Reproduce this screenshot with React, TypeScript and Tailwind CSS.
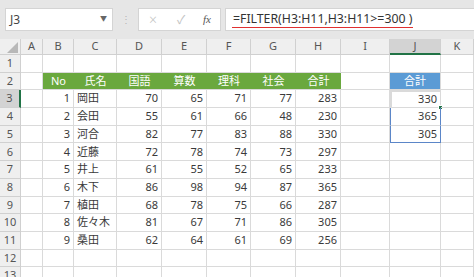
import React from "react";

const cols = [
  { k: "A", w: "w-[22px]" },
  { k: "B", w: "w-[31px]" },
  { k: "C", w: "w-[43px]" },
  { k: "D", w: "w-[45px]" },
  { k: "E", w: "w-[45px]" },
  { k: "F", w: "w-[44px]" },
  { k: "G", w: "w-[45px]" },
  { k: "H", w: "w-[45px]" },
  { k: "I", w: "w-[49px]" },
  { k: "J", w: "w-[51px]" },
  { k: "K", w: "flex-1" },
];

const data = [
  [1, "岡田", 70, 65, 71, 77, 283],
  [2, "会田", 55, 61, 66, 48, 230],
  [3, "河合", 82, 77, 83, 88, 330],
  [4, "近藤", 72, 78, 74, 73, 297],
  [5, "井上", 61, 55, 52, 65, 233],
  [6, "木下", 86, 98, 94, 87, 365],
  [7, "植田", 68, 78, 75, 66, 287],
  [8, "佐々木", 81, 67, 71, 86, 305],
  [9, "桑田", 62, 64, 61, 69, 256],
];

const spill: Record<number, number> = { 3: 330, 4: 365, 5: 305 };
const heads = ["No", "氏名", "国語", "算数", "理科", "社会", "合計"];

function Cell({ w, children, className = "" }: { w: string; children?: React.ReactNode; className?: string }) {
  return (
    <div className={`${w} shrink-0 h-full border-r border-b border-[#dadada] flex items-center px-[3px] relative ${className}`}>
      {children}
    </div>
  );
}

export default function App() {
  const rows = Array.from({ length: 13 }, (_, i) => i + 1);
  return (
    <div className="w-[474px] h-[277px] overflow-hidden bg-white text-[11px] text-[#3a3a3a]" style={{ fontFamily: "'Noto Sans', 'Noto Sans CJK JP', sans-serif" }}>
      {/* formula bar */}
      <div className="h-[39px] bg-[#e6e6e6] flex items-start pt-[8px] pl-[5px]">
        <div className="w-[108px] h-[23px] bg-white border border-[#d4d4d4] flex items-center justify-between pl-[4px] pr-[5px] text-[12px] text-[#444]">
          <span>J3</span>
          <span className="text-[7px] text-[#666]">▼</span>
        </div>
        <div className="w-[25px] h-[23px] flex items-center justify-center text-[#b5b5b5] text-[10px]">⋮</div>
        <div className="w-[83px] h-[23px] bg-white border border-[#d4d4d4] flex items-center text-[#c3c3c3]">
          <span className="w-[28px] text-center text-[14px] font-light">×</span>
          <span className="w-[28px] text-center text-[12px]">✓</span>
          <span className="w-[24px] text-center text-[#555] italic text-[11px]" style={{ fontFamily: "'Liberation Serif', serif" }}>fx</span>
        </div>
        <div className="ml-[4px] flex-1 h-[23px] bg-white border-y border-l border-[#d4d4d4] flex items-center pl-[6px]">
          <span className="text-[12.3px] text-[#333] border-b border-[#e03030] leading-[16px] px-[1px]" style={{ fontFamily: "'Noto Sans', sans-serif" }}>
            =FILTER(H3:H11,H3:H11&gt;=300 )
          </span>
        </div>
      </div>
      {/* column headers */}
      <div className="h-[16px] flex bg-[#efefef] text-[#555]">
        <div className="w-[21px] shrink-0 h-full border-r border-b border-[#d0d0d0] flex items-end justify-end pr-[2px] pb-[1px]">
          <div className="w-0 h-0 border-l-[11px] border-l-transparent border-b-[11px] border-b-[#b8b8b8]" />
        </div>
        {cols.map((c) => (
          <div
            key={c.k}
            className={`${c.w} shrink-0 h-full border-r border-[#d0d0d0] flex items-center justify-center text-[11px] ${c.k === "J" ? "bg-[#d3d3d3] border-b-2 border-b-[#217346]" : "border-b"}`}
          >
            {c.k}
          </div>
        ))}
      </div>
      {rows.map((r) => {
        const d = r >= 3 && r <= 11 ? data[r - 3] : null;
        return (
          <div key={r} className="h-[17.7px] flex">
            <div
              className={`w-[21px] shrink-0 h-full border-b border-[#d0d0d0] flex items-center justify-center text-[#555] ${r === 3 ? "bg-[#d3d3d3] border-r-2 border-r-[#217346]" : "bg-[#efefef] border-r"}`}
            >
              {r}
            </div>
            <Cell w="w-[22px]" />
            {r === 2 ? (
              <div className="flex h-full bg-[#6aa83e] text-white border-b border-[#dadada]">
                {heads.map((h, i) => (
                  <div key={h} className={`${cols[i + 1].w} shrink-0 h-full flex items-center justify-center`}>
                    {h}
                  </div>
                ))}
              </div>
            ) : (
              <>
                <Cell w="w-[31px]" className="justify-end">{d ? d[0] : ""}</Cell>
                <Cell w="w-[43px]">{d ? d[1] : ""}</Cell>
                {[2, 3, 4, 5, 6].map((j) => (
                  <Cell key={j} w={cols[j + 1].w} className="justify-end">
                    {d ? d[j] : ""}
                  </Cell>
                ))}
              </>
            )}
            <Cell w="w-[49px]" />
            {r === 2 ? (
              <div className="w-[51px] shrink-0 h-full bg-[#5b9bd5] text-white flex items-center justify-center border-b border-r border-[#dadada]">合計</div>
            ) : (
              <Cell
                w="w-[51px]"
                className={`justify-end ${r === 3 ? "border-2 border-[#217346]" : ""} ${r === 4 ? "border-l border-l-[#5b86c8] border-r-[#5b86c8]" : ""} ${r === 5 ? "border-l border-l-[#5b86c8] border-r-[#5b86c8] border-b-[#5b86c8]" : ""}`}
              >
                {spill[r] ?? ""}
                {r === 3 && <div className="absolute -right-[3px] -bottom-[3px] w-[5px] h-[5px] bg-[#217346] border border-white" />}
              </Cell>
            )}
            <Cell w="flex-1" />
          </div>
        );
      })}
    </div>
  );
}
